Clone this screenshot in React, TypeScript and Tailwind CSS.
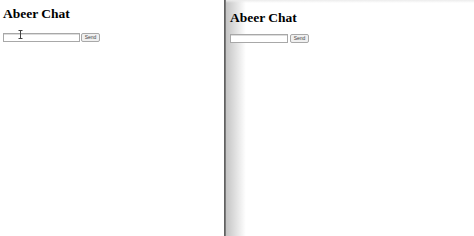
export default function App() {
  return (
    <div className="flex h-[236px] w-[474px] overflow-hidden bg-white font-['Liberation_Serif',serif] text-black">
      <div className="relative w-[224px] shrink-0 px-[3px] pt-[6px]">
        <h1 className="text-[13.5px] leading-[16px] font-bold">Abeer Chat</h1>
        <div className="mt-[11px] flex items-center gap-[1px]">
          <input
            className="h-[9px] w-[77px] border border-[#a8a8a8] bg-white shadow-[inset_0_1px_0_#ddd]"
            type="text"
          />
          <button className="h-[9px] w-[19px] rounded-[2px] border border-[#a8a8a8] bg-[#f0f0f0] font-['Liberation_Sans',sans-serif] text-[5px] leading-none text-[#444]">
            Send
          </button>
        </div>
        <svg
          className="absolute left-[18px] top-[30px]"
          width="5"
          height="9"
          viewBox="0 0 5 9"
        >
          <path d="M0.5 0.5h4M2.5 0.5v8M0.5 8.5h4" stroke="#444" strokeWidth="1" fill="none" />
        </svg>
      </div>
      <div className="w-[2px] shrink-0 bg-gradient-to-r from-[#555] to-[#888]" />
      <div className="flex-1 bg-gradient-to-r from-[#c4c4c4] via-white via-[8%] to-white">
        <div className="h-[3px] bg-gradient-to-b from-[#ececec] to-transparent" />
        <div className="px-[4px] pt-[7px]">
          <h1 className="text-[13.5px] leading-[16px] font-bold">Abeer Chat</h1>
          <div className="mt-[8px] flex items-center gap-[2px]">
            <input
              className="h-[9px] w-[58px] border border-[#a8a8a8] bg-white shadow-[inset_0_1px_0_#ddd]"
              type="text"
            />
            <button className="h-[9px] w-[19px] rounded-[2px] border border-[#a8a8a8] bg-[#f0f0f0] font-['Liberation_Sans',sans-serif] text-[5px] leading-none text-[#444]">
              Send
            </button>
          </div>
        </div>
      </div>
    </div>
  );
}
